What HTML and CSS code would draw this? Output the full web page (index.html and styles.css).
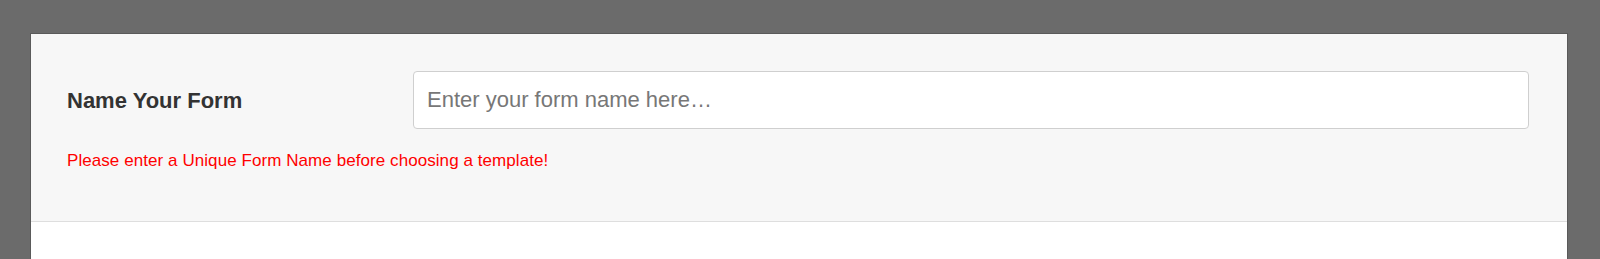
FILE: index.html
```html
<!DOCTYPE html>
<html lang="en">
<head>
<meta charset="utf-8">
<title>Name Your Form</title>
<link rel="stylesheet" href="styles.css">
</head>
<body>
<div class="modal">
  <div class="modal-header">
    <div class="name-row">
      <label class="name-label" for="form-name">Name Your Form</label>
      <input class="name-input" id="form-name" type="text" placeholder="Enter your form name here…">
    </div>
    <p class="name-error">Please enter a Unique Form Name before choosing a template!</p>
  </div>
  <div class="modal-body"></div>
</div>
</body>
</html>
```
FILE: styles.css
```css
html, body {
  margin: 0;
  height: 100%;
}
body {
  background: #6b6b6b;
  padding: 34px 33px 0 31px;
  box-sizing: border-box;
  overflow: hidden;
  font-family: "Liberation Sans", Arial, sans-serif;
}
.modal {
  background: #fff;
  height: 100%;
  box-shadow: 0 0 0 1px #5a5a5a;
}
.modal-header {
  background: #f7f7f7;
  height: 188px;
  box-sizing: border-box;
  padding: 37px 38px 0 36px;
  border-bottom: 1px solid #dedede;
}
.name-row {
  display: flex;
  align-items: center;
}
.name-label {
  flex: 0 0 346px;
  font-size: 22px;
  font-weight: bold;
  color: #333;
  padding-top: 2px;
}
.name-input {
  flex: 1;
  height: 58px;
  box-sizing: border-box;
  border: 1px solid #cfcfcf;
  border-radius: 4px;
  background: #fff;
  padding: 0 13px;
  font-family: "Liberation Sans", Arial, sans-serif;
  font-size: 22px;
  color: #333;
  outline: none;
}
.name-input::placeholder {
  color: #777;
}
.name-error {
  margin: 22px 0 0;
  font-size: 17px;
  line-height: 20px;
  letter-spacing: 0.07px;
  color: #ff0000;
}
```
